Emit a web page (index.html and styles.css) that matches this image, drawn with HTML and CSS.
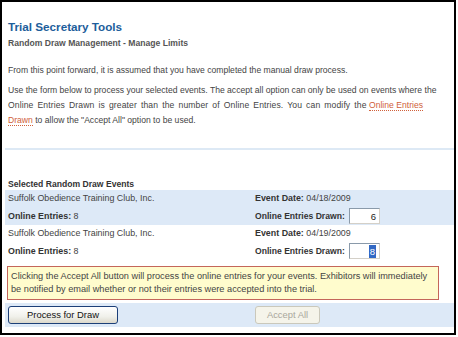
FILE: index.html
```html
<!DOCTYPE html>
<html>
<head>
<meta charset="utf-8">
<link rel="stylesheet" href="styles.css">
</head>
<body>
<div class="frame">
  <div class="content">
    <h1 class="title">Trial Secretary Tools</h1>
    <h2 class="subtitle">Random Draw Management - Manage Limits</h2>
    <p class="p1">From this point forward, it is assumed that you have completed the manual draw process.</p>
    <p class="p2">Use the form below to process your selected events. The accept all option can only be used on events where <span class="wide">the Online Entries Drawn is greater than the number of Online Entries. You can modify the</span> <span class="link">Online Entries<br>Drawn</span> to allow the "Accept All" option to be used.</p>
    <div class="rule"></div>
    <div class="section-head">Selected Random Draw Events</div>
    <div class="event alt">
      <div class="cell">Suffolk Obedience Training Club, Inc.</div>
      <div class="cell"><b>Event Date:</b>&nbsp;04/18/2009</div>
      <div class="cell"><b>Online Entries:</b>&nbsp;8</div>
      <div class="cell"><b class="lbl">Online Entries Drawn:</b><span class="field">6</span></div>
    </div>
    <div class="event">
      <div class="cell">Suffolk Obedience Training Club, Inc.</div>
      <div class="cell"><b>Event Date:</b>&nbsp;04/19/2009</div>
      <div class="cell"><b>Online Entries:</b>&nbsp;8</div>
      <div class="cell"><b class="lbl">Online Entries Drawn:</b><span class="field"><span class="sel">8</span></span></div>
    </div>
    <div class="warning">Clicking the Accept All button will process the online entries for your events. Exhibitors will immediately<br>be notified by email whether or not their entries were accepted into the trial.</div>
    <div class="actions">
      <div class="btn primary">Process for Draw</div>
      <div class="btn disabled">Accept All</div>
    </div>
  </div>
</div>
</body>
</html>
```
FILE: styles.css
```css
html, body {
  margin: 0;
  padding: 0;
  background: #fff;
}
body {
  font-family: "Liberation Sans", Arial, sans-serif;
  font-size: 8.6px;
  color: #444;
}
.frame {
  width: 452px;
  height: 331px;
  border: 2px solid #000;
  overflow: hidden;
}
.content {
  padding-left: 3px;
}
.title {
  margin: 18px 0 0 3px;
  font-size: 11.7px;
  line-height: 14px;
  font-weight: bold;
  color: #1d5e9b;
}
.subtitle {
  margin: 2px 0 0 3px;
  font-size: 8.6px;
  line-height: 14px;
  font-weight: bold;
  color: #555;
}
.p1 {
  margin: 13px 0 0 3px;
  line-height: 14px;
}
.p2 {
  margin: 6px 0 0 3px;
  line-height: 15px;
}
.wide {
  word-spacing: 1.6px;
  letter-spacing: 0.1px;
}
.link {
  color: #d0603a;
  border-bottom: 1px dotted #d0603a;
}
.rule {
  margin-top: 20px;
  height: 2px;
  background: #dde9f5;
}
.section-head {
  margin-top: 28px;
  padding-left: 3px;
  height: 12px;
  line-height: 12px;
  font-weight: bold;
  color: #333;
}
.event {
  display: grid;
  grid-template-columns: 247px 1fr;
  grid-template-rows: 16px 19px;
  height: 35px;
  padding-left: 3px;
  font-size: 8.9px;
}
.event.alt {
  background: #dde9f7;
}
.cell {
  display: flex;
  align-items: center;
  white-space: nowrap;
}
.cell b {
  color: #333;
}
.lbl {
  display: inline-block;
  width: 94px;
  font-size: 8.6px;
}
.field {
  display: block;
  box-sizing: border-box;
  width: 31px;
  height: 16px;
  border: 1px solid #8a9aaa;
  border-right-color: #d4d0c8;
  border-bottom-color: #d4d0c8;
  background: #fff;
  text-align: right;
  padding: 1px 3px 0 0;
  font-size: 9.5px;
  line-height: 13px;
  color: #222;
}
.sel {
  display: inline-block;
  background: #3168c4;
  color: #fff;
  padding: 0 1px;
}
.warning {
  margin: 6px 0 0 2px;
  width: 421px;
  padding: 3px 6px 3px 3px;
  border: 1px solid #c4665a;
  background: #fffccd;
  line-height: 13px;
  font-size: 9.2px;
  white-space: nowrap;
  overflow: hidden;
}
.actions {
  margin-top: 3px;
  display: grid;
  grid-template-columns: 247px 1fr;
  padding: 3px 0 3px 3px;
  background: #dde9f7;
}
.btn {
  box-sizing: border-box;
  height: 18px;
  line-height: 16px;
  text-align: center;
  border-radius: 3px;
  font-size: 9.4px;
}
.btn.primary {
  width: 110px;
  border: 1px solid #1c3f78;
  background: linear-gradient(#ffffff, #f0f0ea 60%, #dcd9cc);
  color: #111;
}
.btn.disabled {
  width: 65px;
  border: 1px solid #cac8bb;
  background: #f5f4ea;
  color: #a9a79c;
}
```
